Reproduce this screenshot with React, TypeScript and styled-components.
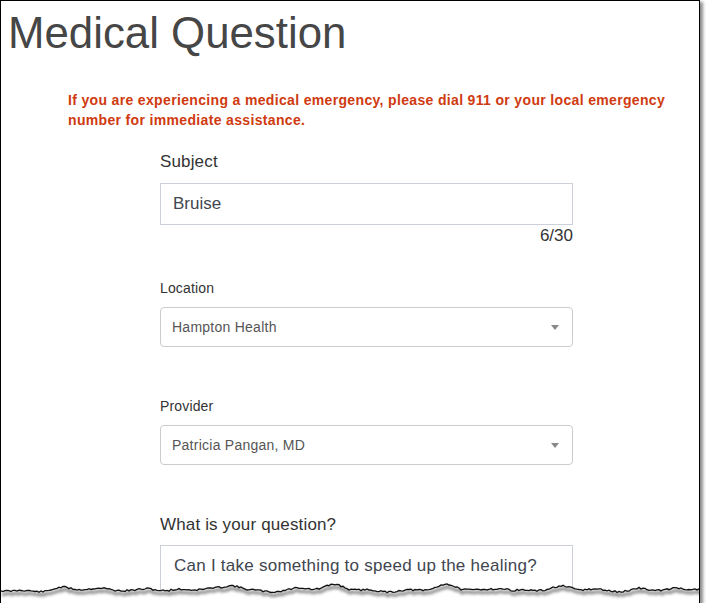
import React from 'react';
import styled, { createGlobalStyle } from 'styled-components';

const GlobalStyle = createGlobalStyle`
    html, body {
        margin: 0;
        padding: 0;
        background: #fff;
    }
    body {
        font-family: "Liberation Sans", Arial, sans-serif;
        width: 708px;
        height: 603px;
        overflow: hidden;
    }
`;

// screenshot frame: black edge on three sides, torn at the bottom
const Frame = styled.div`
    position: relative;
    box-sizing: border-box;
    width: 700px;
    height: 603px;
    border: 1px solid #000;
    border-bottom: none;
    box-shadow: 3px 2px 3px rgba(0, 0, 0, 0.45);
    background: #fff;
    overflow: hidden;
`;

const Title = styled.h1`
    margin: 10px 0 0 7px;
    font-size: 43.8px;
    line-height: 44px;
    font-weight: normal;
    color: #464646;
`;

const Warning = styled.p`
    margin: 35px 20px 0 67px;
    font-size: 14px;
    line-height: 20px;
    letter-spacing: 0.34px;
    font-weight: bold;
    color: #cf3a10;
`;

const Form = styled.div`
    margin: 22px 0 0 159px;
    width: 413px;
    display: flex;
    flex-direction: column;
`;

const Label = styled.label<{ $size: number; $top: number; $gap: number }>`
    display: block;
    margin-top: ${p => p.$top}px;
    margin-bottom: ${p => p.$gap}px;
    font-size: ${p => p.$size}px;
    line-height: 20px;
    letter-spacing: 0.15px;
    color: #333;
`;

const TextInput = styled.input`
    box-sizing: border-box;
    width: 413px;
    height: 42px;
    margin: 0;
    padding: 0 12px;
    border: 1px solid #ccd0d7;
    border-radius: 0;
    font-family: "Liberation Sans", Arial, sans-serif;
    font-size: 17px;
    color: #414650;
    background: #fff;
    outline: none;
`;

const Counter = styled.div`
    margin-top: 1px;
    text-align: right;
    font-size: 17px;
    line-height: 20px;
    color: #333;
`;

const Select = styled.div`
    box-sizing: border-box;
    width: 413px;
    height: 40px;
    display: flex;
    align-items: center;
    justify-content: space-between;
    padding: 0 13px 0 11px;
    border: 1px solid #ccc;
    border-radius: 4px;
    font-size: 14px;
    letter-spacing: 0.25px;
    color: #555;
    background: #fff;
`;

const Caret = styled.span`
    width: 0;
    height: 0;
    border-left: 4px solid transparent;
    border-right: 4px solid transparent;
    border-top: 5px solid #888;
`;

const TextArea = styled.textarea`
    box-sizing: border-box;
    width: 413px;
    height: 90px;
    margin: 0;
    padding: 10px 13px;
    border: 1px solid #ccd0d7;
    border-radius: 0;
    resize: none;
    font-family: "Liberation Sans", Arial, sans-serif;
    font-size: 17px;
    line-height: 20px;
    letter-spacing: 0.25px;
    color: #414650;
    outline: none;
`;

const Torn = styled.svg`
    position: absolute;
    left: 0;
    top: 577px;
`;

// rough paper edge along the bottom of the capture
const tornEdge = () => {
    let s = 11;
    const rand = () => {
        s = (s * 9301 + 49297) % 233280;
        return s / 233280;
    };
    const bumps = [
        { x: 60, a: 2 }, { x: 150, a: 2.5 }, { x: 232, a: 4.5 }, { x: 300, a: 2 },
        { x: 335, a: 4 }, { x: 445, a: 4 }, { x: 500, a: 3 }, { x: 560, a: 2 }, { x: 640, a: 2 },
    ];
    const pts: string[] = [];
    for (let x = 0; x <= 704; x += 2) {
        let y = 12 + 1.2 * Math.sin(x / 19) + 0.8 * Math.sin(x / 6.1 + 1) + (rand() - 0.5) * 1.8;
        bumps.forEach(b => {
            y -= b.a * Math.exp(-((x - b.x) ** 2) / 120);
        });
        pts.push(`${x},${y.toFixed(1)}`);
    }
    return pts;
};

const edge = tornEdge();
const line = 'M' + edge.join(' L');
const fill = line + ' L708,12 L708,26 L0,26 Z';

export default function App() {
    return <>
        <GlobalStyle />
        <Frame>
            <Title>Medical Question</Title>
            <Warning>
                If you are experiencing a medical emergency, please dial 911 or your local emergency
                number for immediate assistance.
            </Warning>
            <Form>
                <Label $size={17} $top={0} $gap={11}>Subject</Label>
                <TextInput defaultValue="Bruise" readOnly />
                <Counter>6/30</Counter>

                <Label $size={14} $top={32} $gap={9}>Location</Label>
                <Select>
                    <span>Hampton Health</span>
                    <Caret />
                </Select>

                <Label $size={14} $top={49} $gap={9}>Provider</Label>
                <Select>
                    <span>Patricia Pangan, MD</span>
                    <Caret />
                </Select>

                <Label $size={17} $top={50} $gap={10}>What is your question?</Label>
                <TextArea defaultValue="Can I take something to speed up the healing?" readOnly />
            </Form>
            <Torn width="708" height="26" viewBox="0 0 708 26">
                <defs>
                    <filter id="blur" x="-5%" y="-50%" width="110%" height="200%">
                        <feGaussianBlur stdDeviation="1.8" />
                    </filter>
                </defs>
                <path d={fill} fill="#fff" />
                <path d={line} fill="none" stroke="#888" strokeWidth="3" filter="url(#blur)" transform="translate(1 3)" />
                <path d={line} fill="none" stroke="#111" strokeWidth="1.3" />
            </Torn>
        </Frame>
    </>;
}
